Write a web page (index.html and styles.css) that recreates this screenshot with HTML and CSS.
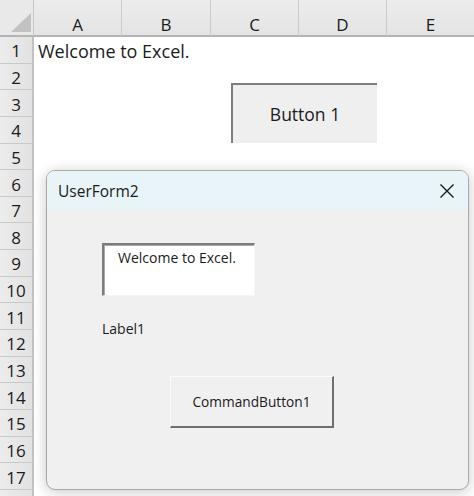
FILE: index.html
```html
<!DOCTYPE html>
<html lang="en">
<head>
  <meta charset="UTF-8">
  <title>Excel UserForm</title>
  <link rel="stylesheet" href="styles.css">
</head>
<body>
  <div class="sheet">
    <!-- Column headers -->
    <div class="corner"><div class="corner-tri"></div></div>
    <div class="colhead">A</div>
    <div class="colhead">B</div>
    <div class="colhead">C</div>
    <div class="colhead">D</div>
    <div class="colhead">E</div>

    <!-- Rows -->
    <div class="rowhead">1</div><div class="cells"><span class="cell-text">Welcome to Excel.</span></div>
    <div class="rowhead">2</div><div class="cells"></div>
    <div class="rowhead">3</div><div class="cells"></div>
    <div class="rowhead">4</div><div class="cells"></div>
    <div class="rowhead">5</div><div class="cells"></div>
    <div class="rowhead">6</div><div class="cells"></div>
    <div class="rowhead">7</div><div class="cells"></div>
    <div class="rowhead">8</div><div class="cells"></div>
    <div class="rowhead">9</div><div class="cells"></div>
    <div class="rowhead">10</div><div class="cells"></div>
    <div class="rowhead">11</div><div class="cells"></div>
    <div class="rowhead">12</div><div class="cells"></div>
    <div class="rowhead">13</div><div class="cells"></div>
    <div class="rowhead">14</div><div class="cells"></div>
    <div class="rowhead">15</div><div class="cells"></div>
    <div class="rowhead">16</div><div class="cells"></div>
    <div class="rowhead">17</div><div class="cells"></div>
    <!-- row 18 only peeks in at the bottom edge -->
    <div class="rowhead"></div><div class="cells"></div>

    <!-- Floating form button on the sheet -->
    <div class="sheet-btn">Button 1</div>

    <!-- UserForm window -->
    <div class="userform">
      <div class="uf-title">
        <span class="uf-caption">UserForm2</span>
        <svg class="uf-close" width="16" height="16" viewBox="0 0 16 16">
          <path d="M1.5 1.5 L14.5 14.5 M14.5 1.5 L1.5 14.5" stroke="#1a1a1a" stroke-width="1.4" fill="none"/>
        </svg>
      </div>
      <div class="uf-body">
        <div class="uf-textbox">Welcome to Excel.</div>
        <div class="uf-label">Label1</div>
        <div class="uf-cmd">CommandButton1</div>
      </div>
    </div>
  </div>
</body>
</html>
```

FILE: styles.css
```css
body {
  margin: 0;
  padding: 0;
  font-family: "Open Sans", "Noto Sans", sans-serif;
  color: #1b1b1b;
  background: #fff;
  overflow: hidden;
}
.sheet {
  position: relative;
  width: 474px;
  height: 496px;
  display: grid;
  grid-template-columns: 34px 88px 89px 88px 88px 88px;
  grid-template-rows: 37px repeat(18, 26.65px);
  overflow: hidden;
}
/* Headers */
.corner {
  grid-column: 1;
  background: #e9e9e9;
  border-right: 1px solid #c6c6c6;
  border-bottom: 2px solid #b4b4b4;
  position: relative;
}
.corner-tri {
  position: absolute;
  right: 2px;
  bottom: 3px;
  width: 0;
  height: 0;
  border-left: 20px solid transparent;
  border-bottom: 19px solid #c2c2c2;
}
.colhead {
  background: linear-gradient(to bottom, #ececec, #e4e4e4);
  border-right: 1px solid #cbcbcb;
  border-bottom: 2px solid #b4b4b4;
  font-size: 17px;
  line-height: 22px;
  text-align: center;
  padding-top: 14px;
  box-sizing: border-box;
}
.rowhead {
  grid-column: 1;
  background: linear-gradient(to right, #ececec, #e2e2e2);
  border-right: 2px solid #c2c2c2;
  border-bottom: 1px solid #c9c9c9;
  font-size: 17px;
  display: flex;
  align-items: center;
  justify-content: center;
  padding-top: 2px;
  box-sizing: border-box;
}
.cells {
  grid-column: 2 / span 5;
  background: #fff;
  display: flex;
  align-items: center;
}
.cell-text {
  padding: 2px 0 0 4px;
  font-size: 18px;
  white-space: nowrap;
}
/* Sheet button */
.sheet-btn {
  position: absolute;
  left: 231px;
  top: 83px;
  width: 146px;
  height: 60px;
  box-sizing: border-box;
  background: #efefef;
  border-top: 2px solid #7e7e7e;
  border-left: 2px solid #7e7e7e;
  font-size: 17.5px;
  display: flex;
  align-items: center;
  justify-content: center;
}
/* UserForm */
.userform {
  position: absolute;
  left: 46px;
  top: 170px;
  width: 423px;
  height: 320px;
  box-sizing: border-box;
  border: 1px solid #a8a8a8;
  border-radius: 9px;
  background: #f0f0f0;
  box-shadow: 0 2px 14px rgba(0,0,0,0.22);
  display: flex;
  flex-direction: column;
  overflow: hidden;
}
.uf-title {
  height: 39px;
  flex-shrink: 0;
  background: #e8f4f7;
  display: flex;
  align-items: center;
  justify-content: space-between;
  padding: 0 13px 0 11px;
}
.uf-caption { font-size: 15.5px; }
.uf-close { display: block; }
.uf-body {
  flex: 1;
  display: flex;
  flex-direction: column;
  align-items: flex-start;
  padding: 33px 0 0 55px;
}
.uf-textbox {
  width: 153px;
  height: 53px;
  box-sizing: border-box;
  background: #fff;
  border-style: solid;
  border-width: 2px 1px 1px 2px;
  border-color: #7d7d7d #f6f6f6 #f6f6f6 #7d7d7d;
  box-shadow: inset 1px 1px 0 #a8a8a8;
  font-size: 14px;
  padding: 3px 0 0 14px;
}
.uf-label {
  margin-top: 23px;
  font-size: 14px;
}
.uf-cmd {
  margin: 38px 0 0 68px;
  width: 164px;
  height: 52px;
  box-sizing: border-box;
  background: #f0f0f0;
  border-style: solid;
  border-width: 1px 2px 2px 1px;
  border-color: #fbfbfb #6f6f6f #6f6f6f #fbfbfb;
  font-size: 13.7px;
  display: flex;
  align-items: center;
  justify-content: center;
}
```
